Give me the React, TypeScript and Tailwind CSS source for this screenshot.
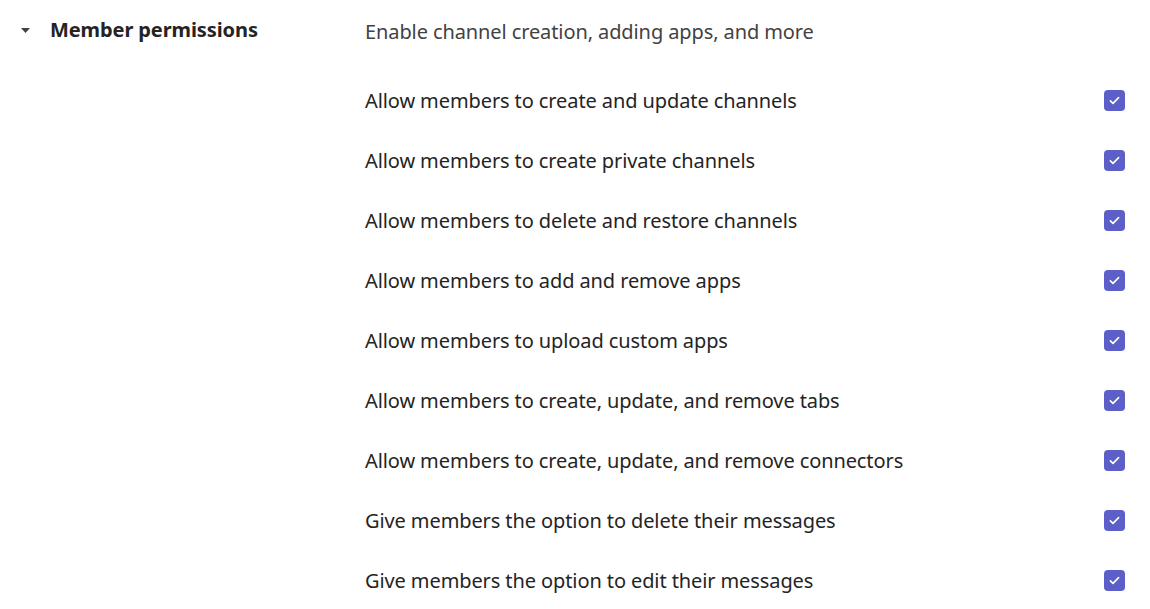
import React from 'react';

const PERMISSIONS = [
  'Allow members to create and update channels',
  'Allow members to create private channels',
  'Allow members to delete and restore channels',
  'Allow members to add and remove apps',
  'Allow members to upload custom apps',
  'Allow members to create, update, and remove tabs',
  'Allow members to create, update, and remove connectors',
  'Give members the option to delete their messages',
  'Give members the option to edit their messages',
];

function CheckBox() {
  return (
    <div className="w-[21px] h-[21px] rounded-[4px] bg-[#5b5fc7] flex items-center justify-center -mt-[1px]">
      <svg width="13" height="13" viewBox="0 0 12 12" fill="none">
        <path d="M2.2 6.3l2.4 2.4 5.2-5.3" stroke="white" strokeWidth="1.5" strokeLinecap="round" strokeLinejoin="round" />
      </svg>
    </div>
  );
}

export default function App() {
  return (
    <div
      className="w-[1150px] h-[609px] bg-white overflow-hidden flex pt-[2px] text-[#242424]"
      style={{ fontFamily: '"Noto Sans", "Open Sans", sans-serif' }}
    >
      {/* Section title */}
      <div className="w-[365px] shrink-0 h-[56px] flex items-center pl-[21px]">
        <svg width="9" height="5" viewBox="0 0 9 5" className="mt-[1px]">
          <path d="M0 0h9L4.5 5z" fill="#424242" />
        </svg>
        <span className="ml-[20px] text-[20px] font-bold tracking-[-0.1px]">Member permissions</span>
      </div>

      {/* Settings */}
      <div className="flex-1 pr-[25px]">
        <div className="h-[60px] flex items-center text-[20px] text-[#424242] tracking-[-0.1px]">
          Enable channel creation, adding apps, and more
        </div>
        <div className="mt-[9px]">
          {PERMISSIONS.map((label) => (
            <div key={label} className="h-[60px] flex items-center justify-between">
              <span className="text-[20px] tracking-[-0.1px]">{label}</span>
              <CheckBox />
            </div>
          ))}
        </div>
      </div>
    </div>
  );
}
